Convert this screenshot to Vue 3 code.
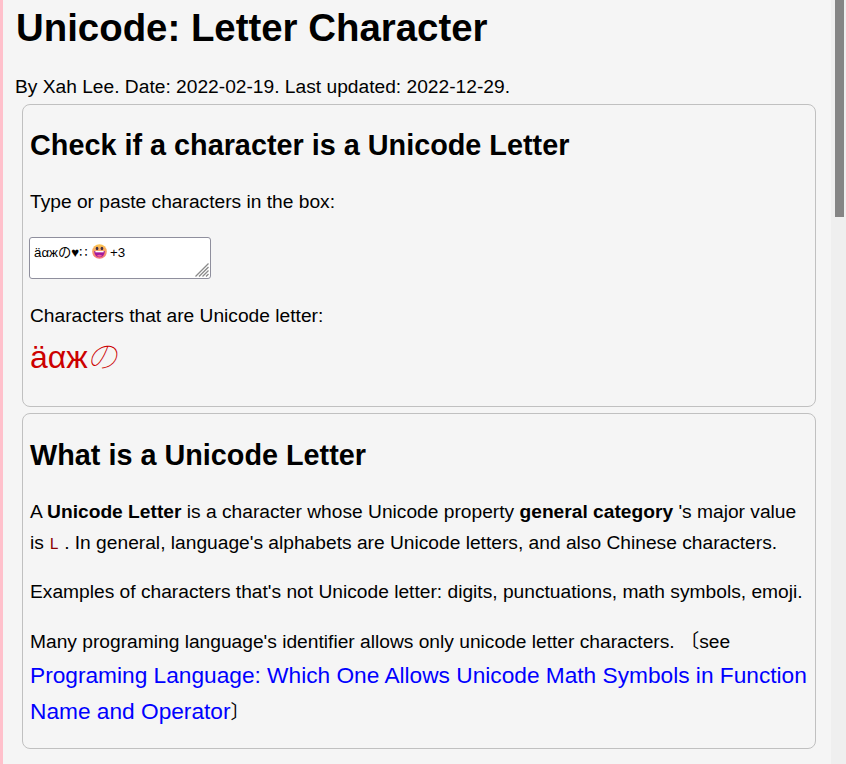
<script setup>
const sample = 'äαжの♥∷      +3'
</script>

<template>
  <div class="page">
    <main class="content">
      <h1>Unicode: Letter Character</h1>
      <p class="byline">By Xah Lee. Date: 2022-02-19. Last updated: 2022-12-29.</p>

      <section class="card">
        <h2>Check if a character is a Unicode Letter</h2>
        <p class="lead">Type or paste characters in the box:</p>
        <div class="box">
          <textarea class="input" :value="sample" aria-label="Characters"></textarea>
          <svg class="emoji" viewBox="0 0 16 16" aria-hidden="true">
            <defs>
              <linearGradient id="face" x1="0" y1="0" x2="0" y2="1">
                <stop offset="0" stop-color="#fcc94e" />
                <stop offset="1" stop-color="#f4707e" />
              </linearGradient>
            </defs>
            <circle cx="8" cy="8" r="7.800" fill="url(#face)" />
            <ellipse cx="5.400" cy="4.800" rx="1.400" ry="1.800" fill="#40304a" />
            <ellipse cx="10.600" cy="4.800" rx="1.400" ry="1.800" fill="#40304a" />
            <path d="M2.400 7.400h11.200c0 4-2.500 6.800-5.600 6.800S2.400 11.400 2.400 7.400z" fill="#a3189c" />
            <path d="M3.600 7.400h8.800v1.500H3.600z" fill="#fff" />
            <path d="M5.200 12.600c1.300-1.600 4.300-1.600 5.600 0-1.500 1.300-4.100 1.300-5.600 0z" fill="#f2609a" />
          </svg>
          <svg class="grip" viewBox="0 0 14 14" aria-hidden="true">
            <path d="M13.500 .5 .5 13.500M13.500 4 4 13.500M13.500 7.500 7.500 13.500M13.500 11 11 13.500" stroke="#8a8a8a" stroke-width="1.300" fill="none" />
          </svg>
        </div>
        <p class="after-box">Characters that are Unicode letter:</p>
        <p class="result">äαж<span class="kana">の</span></p>
      </section>

      <section class="card second">
        <h2>What is a Unicode Letter</h2>
        <p class="lead">A <b>Unicode Letter</b> is a character whose Unicode property <b>general category</b> 's major value is <code>L</code> . In general, language's alphabets are Unicode letters, and also Chinese characters.</p>
        <p>Examples of characters that's not Unicode letter: digits, punctuations, math symbols, emoji.</p>
        <p class="last">Many programing language's identifier allows only unicode letter characters. 〔see <a href="#">Programing Language: Which One Allows Unicode Math Symbols in Function Name and Operator</a>〕</p>
      </section>
    </main>
    <div class="scrollbar"><div class="thumb"></div></div>
  </div>
</template>

<style>
html, body { margin: 0; height: 100%; overflow: hidden; background: #f5f5f5; }
</style>

<style scoped>
.page {
  height: 764px;
  display: flex;
  border-left: 3px solid #ffc0cb;
  box-sizing: border-box;
  overflow: hidden;
  font-family: "Liberation Sans", "Noto Sans CJK JP", sans-serif;
  font-size: 19.2px;
  line-height: 30.4px;
  color: #000;
}
.content { flex: 1; min-width: 0; padding: 0 15px 0 13px; }
h1 { font-size: 38.4px; line-height: 1.2; margin: 5px 0 0; }
.byline { margin: 21px 0 0 -1px; }
.card {
  border: 1px solid #c0c0c0;
  border-radius: 8px;
  padding: 0 6px 0 7px;
  margin: 2px 0 0 6px;
}
.second { margin-top: 6px; }
h2 { font-size: 28.8px; line-height: 1.2; margin: 23px 0 0; }
.second h2 { margin-top: 24px; }
p { margin: 19.2px 0 0; }
.lead { margin-top: 24.4px; }
.after-box { margin-top: 21.2px; }
.last { margin-bottom: 19px; }
.box { position: relative; width: 182px; height: 42px; margin: 19.600px 0 0 -1px; }
.input {
  display: block;
  width: 182px;
  height: 42px;
  box-sizing: border-box;
  margin: 0;
  padding: 7px 4px 2px;
  border: 1px solid #8f8f9d;
  border-radius: 3px;
  background: #fff;
  resize: none;
  font-family: "Liberation Sans", "DejaVu Sans", "Noto Sans CJK JP", sans-serif;
  font-size: 13.33px;
  line-height: 16px;
  color: #000;
  white-space: pre;
}
.emoji { position: absolute; left: 63px; top: 7px; width: 15px; height: 15px; }
.grip { position: absolute; right: 2px; bottom: 2px; width: 14px; height: 14px; }
.result { color: #cc0000; font-size: 32px; line-height: 1.2; margin: 7px 0 30px; }
.kana { font-weight: 100; font-style: italic; margin-left: -2px; }
code {
  font-family: "Liberation Mono", monospace;
  font-size: 16px;
  line-height: 1;
  color: #8b0000;
}
a { color: #0000ff; font-size: 22.7px; line-height: 36px; text-decoration: none; }
.scrollbar { flex: none; width: 15px; background: #efefef; }
.thumb { width: 9px; height: 217px; margin-left: 4px; background: #858585; }
</style>
